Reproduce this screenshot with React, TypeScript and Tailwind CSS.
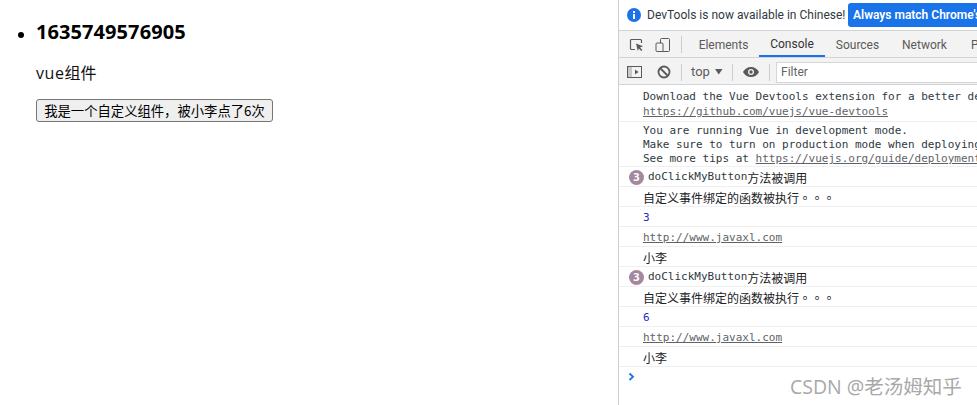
const mono = "font-['DejaVu_Sans_Mono','Noto_Sans_CJK_SC',monospace]";

function Row({ children, className = "" }: { children: React.ReactNode; className?: string }) {
  return (
    <div className={`h-5 pl-[24px] pt-[2px] border-b border-[#f0f0f0] flex items-center whitespace-nowrap text-[11px] leading-[14px] ${mono} ${className}`}>
      {children}
    </div>
  );
}

function Group({ n }: { n: number }) {
  return (
    <div className={`h-5 pl-[10px] pt-[2px] border-b border-[#f0f0f0] flex items-center whitespace-nowrap text-[11px] ${mono} text-[#303942]`}>
      <span className="w-[15px] h-[15px] rounded-full bg-[#a5879f] text-white font-bold text-[11px] flex items-center justify-center mr-[4px] font-['Open_Sans',sans-serif]">{n}</span>
      <span>doClickMyButton</span>
      <span className="text-xs text-[#202124] font-['Noto_Sans_CJK_SC',sans-serif]">方法被调用</span>
    </div>
  );
}

function Cjk({ children }: { children: React.ReactNode }) {
  return <span className="text-xs text-[#202124] font-['Noto_Sans_CJK_SC',sans-serif]">{children}</span>;
}

function Dots() {
  return <span className="text-xs text-[#202124] font-['Noto_Sans_CJK_TC',sans-serif]">。。。</span>;
}

function Link({ children }: { children: React.ReactNode }) {
  return <span className="underline text-[#5f6368]">{children}</span>;
}

function Sep() {
  return <span className="w-px h-[17px] bg-[#ccc] shrink-0" />;
}

function Tab({ children, active = false, className = "" }: { children: React.ReactNode; active?: boolean; className?: string }) {
  return (
    <span className={`h-full flex items-center justify-center shrink-0 text-xs pt-[2px] ${active ? "border-b-2 border-[#1a73e8] text-[#333]" : "text-[#5a5a5a]"} ${className}`}>
      {children}
    </span>
  );
}

export default function App() {
  return (
    <div className="relative w-[977px] h-[405px] overflow-hidden flex bg-white font-['Open_Sans','Noto_Sans_CJK_SC',sans-serif] text-black">
      <main className="w-[618px] shrink-0 pl-9 pt-[18px]">
        <ul className="relative">
          <li className="absolute left-[-18px] top-[14px] w-[6px] h-[6px] rounded-full bg-black" />
          <li>
            <h3 className="text-[20px] tracking-[0.08px] leading-[27px] font-bold font-['Open_Sans',sans-serif]">1635749576905</h3>
            <p className="mt-[16px] text-base leading-[22px] text-[#111]"><span className="tracking-[0.6px]">vue</span><span className="font-['Noto_Sans_CJK_SC',sans-serif]">组件</span></p>
            <button className="mt-[15px] h-[23px] w-[237px] bg-[#efefef] border border-[#767676] rounded-[3px] text-[13.33px] leading-none flex items-center justify-center whitespace-nowrap font-['Noto_Sans_CJK_SC',sans-serif]">
              我是一个自定义组件，被小李点了6次
            </button>
          </li>
        </ul>
      </main>

      <section className="flex-1 min-w-0 border-l border-[#ccd0d5] flex flex-col overflow-hidden font-['Roboto',sans-serif]">
        <div className="h-[31px] shrink-0 border-b border-[#d0d4d8] flex items-center pl-2 whitespace-nowrap text-xs text-[#303942]">
          <svg width="14" height="14" viewBox="0 0 14 14" className="shrink-0 mr-[6px]">
            <circle cx="7" cy="7" r="7" fill="#1a73e8" />
            <rect x="6" y="6" width="2" height="5" fill="#fff" />
            <rect x="6" y="3" width="2" height="2" fill="#fff" />
          </svg>
          <span className="w-[195px] shrink-0">DevTools is now available in Chinese!</span>
          <span className="ml-[6px] h-6 pl-[5px] pr-3 bg-[#1a73e8] text-white font-semibold rounded-[3px] flex items-center shrink-0">Always match Chrome's language</span>
        </div>

        <div className="h-[27px] shrink-0 border-b border-[#d0d4d8] bg-[#f3f3f3] flex items-center">
          <div className="w-[62px] shrink-0 h-full flex items-center pl-[10px] pt-[2px] gap-[10px]">
            <svg width="16" height="16" viewBox="0 0 16 16" fill="none" className="shrink-0">
              <path d="M6 12.500H2.500a1 1 0 0 1-1-1v-8a1 1 0 0 1 1-1h9a1 1 0 0 1 1 1V6" stroke="#5a5a5a" strokeWidth="1.200" />
              <path d="M7 6.500l7 2.700-3 1.200 2.400 2.600-1.200 1.100-2.400-2.600L8.800 14z" fill="#5a5a5a" />
            </svg>
            <svg width="16" height="16" viewBox="0 0 16 16" fill="none" className="shrink-0">
              <rect x="5.500" y="1.500" width="9" height="13" rx="1" stroke="#5a5a5a" />
              <rect x="1" y="6" width="7" height="8.500" rx="1" fill="#f3f3f3" stroke="#5a5a5a" />
            </svg>
          </div>
          <Sep />
          <Tab className="w-[71px] ml-[6px]">Elements</Tab>
          <Tab active className="w-[66px]">Console</Tab>
          <Tab className="w-[65px]">Sources</Tab>
          <Tab className="w-[69px]">Network</Tab>
          <Tab className="ml-[12px]">Performance</Tab>
        </div>

        <div className="h-[27px] shrink-0 border-b border-[#d0d4d8] bg-[#f3f3f3] flex items-center pt-[2px] text-xs text-[#5a5a5a]">
          <div className="w-[62px] shrink-0 flex items-center pl-[8px] gap-[14px]">
            <svg width="16" height="14" viewBox="0 0 16 14" fill="none" className="shrink-0">
              <rect x="0.500" y="1.500" width="14" height="11" stroke="#5a5a5a" />
              <rect x="1" y="2" width="4" height="10" fill="#c8c8c8" />
              <path d="M8 4.500l3.500 2.500L8 9.500z" fill="#5a5a5a" />
            </svg>
            <svg width="14" height="14" viewBox="0 0 14 14" fill="none" className="shrink-0">
              <circle cx="7" cy="7" r="5.500" stroke="#5a5a5a" strokeWidth="1.800" />
              <path d="M3 3l8 8" stroke="#5a5a5a" strokeWidth="1.800" />
            </svg>
          </div>
          <Sep />
          <span className="ml-[9px] w-[18px] text-[13px]">top</span>
          <svg width="8" height="6" viewBox="0 0 8 6" className="ml-[6px] mr-[9px] shrink-0"><path d="M0 0h7.500L3.750 5.500z" fill="#5a5a5a" /></svg>
          <Sep />
          <svg width="16" height="10" viewBox="0 0 16 10" className="mx-[10px] shrink-0">
            <path d="M8 0C4.500 0 1.500 2 0 5c1.500 3 4.500 5 8 5s6.500-2 8-5c-1.500-3-4.500-5-8-5z" fill="#5a5a5a" />
            <circle cx="8" cy="5" r="3" fill="#f3f3f3" />
            <circle cx="8" cy="5" r="1.700" fill="#5a5a5a" />
          </svg>
          <Sep />
          <div className="ml-[6px] h-[21px] flex-1 bg-white border border-[#d6d6d6] border-r-0 pl-[4px] flex items-center text-[#5f6368]">Filter</div>
        </div>

        <div className="flex-1 min-h-0">
          <div className={`h-[37px] pl-[24px] pt-[4px] border-b border-[#f0f0f0] whitespace-nowrap text-[11px] leading-[15px] text-[#303942] ${mono}`}>
            <div>Download the Vue Devtools extension for a better development experience:</div>
            <Link>https://github.com/vuejs/vue-devtools</Link>
          </div>
          <div className={`h-[45px] pl-[24px] pt-[2px] border-b border-[#f0f0f0] whitespace-nowrap text-[11px] leading-[14px] text-[#303942] ${mono}`}>
            <div>You are running Vue in development mode.</div>
            <div>Make sure to turn on production mode when deploying for production.</div>
            <div>See more tips at <Link>https://vuejs.org/guide/deployment.html</Link></div>
          </div>
          <Group n={3} />
          <Row><Cjk>自定义事件绑定的函数被执行</Cjk><Dots /></Row>
          <Row className="text-[#2a2ac0]">3</Row>
          <Row className="pt-[3px]"><Link>http://www.javaxl.com</Link></Row>
          <Row><Cjk>小李</Cjk></Row>
          <Group n={3} />
          <Row><Cjk>自定义事件绑定的函数被执行</Cjk><Dots /></Row>
          <Row className="text-[#2a2ac0]">6</Row>
          <Row className="pt-[3px]"><Link>http://www.javaxl.com</Link></Row>
          <Row><Cjk>小李</Cjk></Row>
          <div className="pl-[9px] pt-[5px]">
            <svg width="8" height="10" viewBox="0 0 8 10" fill="none"><path d="M1.500 1.500L5 4.800 1.500 8" stroke="#1a73e8" strokeWidth="1.800" /></svg>
          </div>
        </div>
      </section>

      <div className="absolute left-[790px] top-[375px] text-[19.5px] leading-[24px] text-[#a8a8a8] whitespace-nowrap font-['Open_Sans','Noto_Sans_CJK_SC',sans-serif]">
        CSDN @老汤姆知乎
      </div>
    </div>
  );
}
